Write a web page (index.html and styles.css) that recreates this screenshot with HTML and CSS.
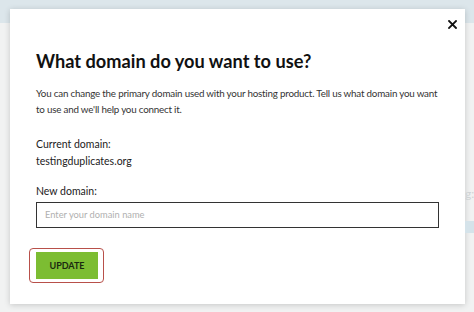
FILE: index.html
```html
<!DOCTYPE html>
<html>
<head>
<meta charset="utf-8">
<link rel="stylesheet" href="styles.css">
</head>
<body>
<div class="page">
  <div class="side-hint">
    <span class="hint-text">g:</span>
    <span class="hint-bar"></span>
  </div>
  <div class="modal">
    <div class="modal-top">
      <button class="close" aria-label="Close">
        <svg width="9" height="9" viewBox="0 0 9 9"><path d="M1 1L8 8M8 1L1 8" stroke="#111" stroke-width="1.8" stroke-linecap="square"/></svg>
      </button>
    </div>
    <h1 class="title">What domain do you want to use?</h1>
    <p class="intro">You can change the primary domain used with your hosting product. Tell us what domain you want to use and we'll help you connect it.</p>
    <div class="current">
      <div class="label">Current domain:</div>
      <div class="value">testingduplicates.org</div>
    </div>
    <label class="label new-label">New domain:</label>
    <div class="input">Enter your domain name</div>
    <div class="actions">
      <div class="focus-ring"><button class="update">UPDATE</button></div>
    </div>
  </div>
</div>
</body>
</html>
```
FILE: styles.css
```css
* { box-sizing: border-box; }
html, body { margin: 0; padding: 0; }
body {
  width: 474px;
  height: 312px;
  overflow: hidden;
  background: linear-gradient(#dce6eb 0, #dce6eb 23px, #f1f2f2 23px);
  font-family: "Lato", "Noto Sans", sans-serif;
  color: #222;
}
.page {
  position: relative;
  padding: 9px 0 0 10px;
}
.side-hint {
  position: absolute;
  right: 0;
  top: 186px;
  width: 9px;
  overflow: hidden;
  display: flex;
  flex-direction: column;
  gap: 20px;
}
.hint-text { font-size: 12px; color: #cfd3d5; white-space: nowrap; }
.hint-bar { display: block; height: 12px; background: #d5e3ea; }
.modal {
  width: 455px;
  height: 295px;
  background: #fff;
  box-shadow: 0 1px 6px rgba(0,0,0,0.18);
  padding: 8px 26px 0 26px;
}
.modal-top {
  display: flex;
  justify-content: flex-end;
  margin-right: -18px;
  height: 14px;
}
.close {
  border: 0;
  background: none;
  padding: 0;
  width: 9px;
  height: 9px;
  margin-top: 3px;
  display: block;
}
.close svg { display: block; }
.title {
  margin: 18px 0 0 0;
  font-size: 18.2px;
  line-height: 24px;
  font-weight: 700;
  color: #111;
}
.intro {
  margin: 12px 0 0 0;
  font-size: 9.8px;
  letter-spacing: -0.2px;
  line-height: 16px;
  color: #333;
}
.current { margin-top: 19px; }
.label, .value {
  font-size: 10.5px;
  line-height: 17px;
  color: #222;
  display: block;
}
.new-label { margin-top: 13px; }
.input {
  margin-top: 2px;
  width: 403px;
  height: 26px;
  border: 1.5px solid #333;
  padding: 0 8px;
  font-size: 9.3px;
  line-height: 23px;
  color: #b0b0b0;
}
.actions { margin-top: 20px; margin-left: -7px; }
.focus-ring {
  display: inline-flex;
  padding: 3px 5px 3px 6px;
  border: 1.5px solid #b8504a;
  border-radius: 4px;
}
.update {
  width: 62px;
  height: 27px;
  border: 0;
  background: #7cbd32;
  font-family: "Lato", "Noto Sans", sans-serif;
  font-weight: 700;
  font-size: 9px;
  color: #1a2a10;
  padding: 0;
}
```
